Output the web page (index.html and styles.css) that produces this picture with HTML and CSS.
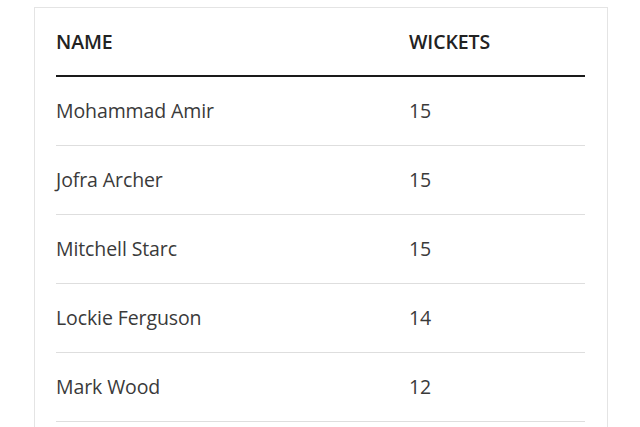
FILE: index.html
```html
<!DOCTYPE html>
<html>
<head>
<meta charset="utf-8">
<link rel="stylesheet" href="styles.css">
</head>
<body>
<div class="page">
  <div class="card">
    <table class="stats">
      <thead>
        <tr><th class="col-name">NAME</th><th>WICKETS</th></tr>
      </thead>
      <tbody>
        <tr><td>Mohammad Amir</td><td>15</td></tr>
        <tr><td>Jofra Archer</td><td>15</td></tr>
        <tr><td>Mitchell Starc</td><td>15</td></tr>
        <tr><td>Lockie Ferguson</td><td>14</td></tr>
        <tr><td>Mark Wood</td><td>12</td></tr>
      </tbody>
    </table>
  </div>
</div>
</body>
</html>
```

FILE: styles.css
```css
html, body {
  margin: 0;
  padding: 0;
  background: #ffffff;
}
.page {
  padding: 7px 0 0 34px;
  font-family: "Open Sans", "Liberation Sans", sans-serif;
}
.card {
  width: 531px;
  border: 1px solid #e4e4e4;
  padding: 0 20px 20px 21px;
  background: #fff;
}
.stats {
  width: 529px;
  border-collapse: collapse;
}
.stats th {
  text-align: left;
  font-size: 19.5px;
  font-weight: 600;
  color: #222;
  line-height: 24px;
  padding: 22px 0 21px 0;
  border-bottom: 2px solid #1a1a1a;
  letter-spacing: -0.1px;
}
.stats .col-name {
  width: 353px;
}
.stats td {
  font-size: 19.5px;
  font-weight: 400;
  color: #3a3a3a;
  line-height: 24px;
  padding: 22px 0;
  border-bottom: 1px solid #dedede;
  letter-spacing: -0.1px;
}
```
